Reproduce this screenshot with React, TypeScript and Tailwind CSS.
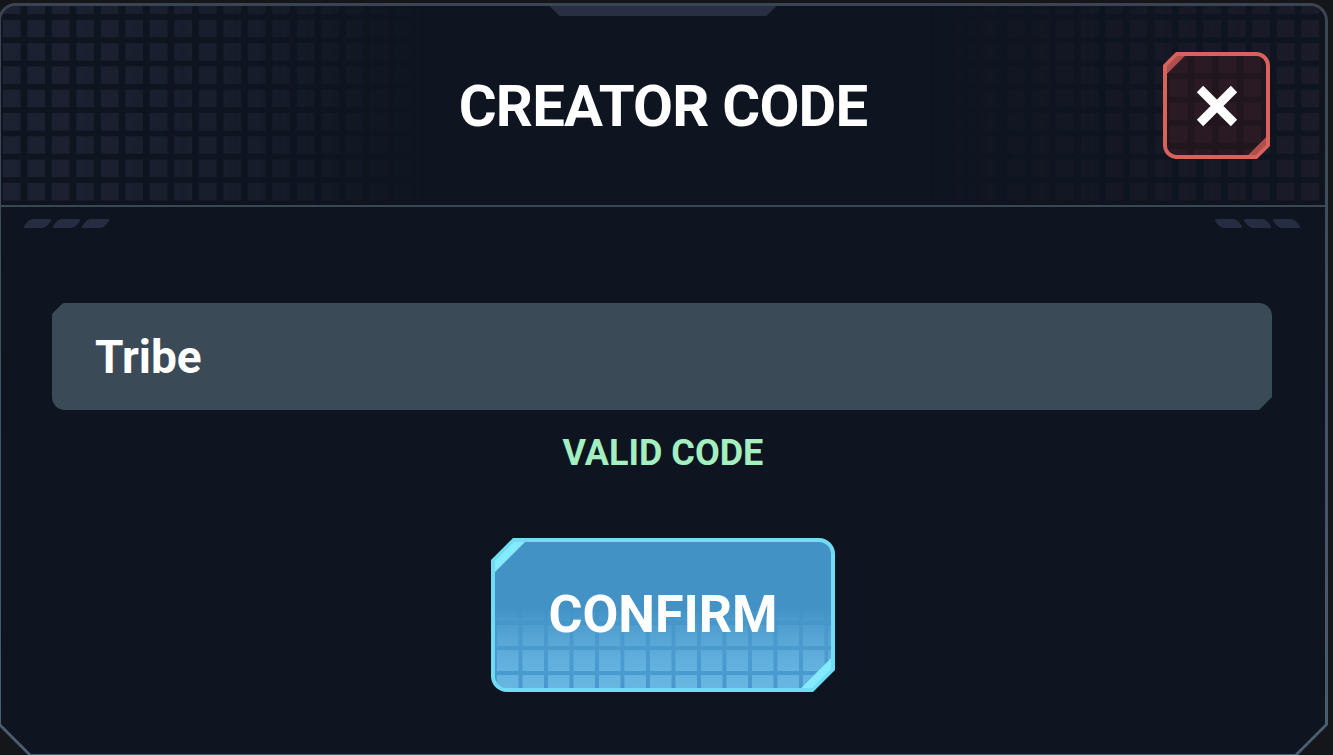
import React from "react";

const font = { fontFamily: "Roboto, 'Noto Sans', sans-serif" };

function Dashes({ flip }: { flip?: boolean }) {
  return (
    <div className="flex gap-[6px]">
      {[0, 1, 2].map((i) => (
        <div
          key={i}
          className={`h-[9px] w-[23px] rounded-[3px] bg-[#262d40] ${flip ? "skew-x-[40deg]" : "-skew-x-[40deg]"}`}
        />
      ))}
    </div>
  );
}

function CloseButton() {
  return (
    <div className="h-[107px] w-[107px] rounded-[14px] bg-[#d9625c] p-[4px] [clip-path:polygon(13px_0,100%_0,100%_calc(100%_-_13px),calc(100%_-_13px)_100%,0_100%,0_13px)]">
      <div className="h-full w-full rounded-[10px] bg-[#b04e4d] [clip-path:polygon(10px_0,100%_0,100%_calc(100%_-_10px),calc(100%_-_10px)_100%,0_100%,0_10px)]">
        <div className="relative flex h-full w-full items-center justify-center overflow-hidden rounded-[10px] bg-[#23171f] [clip-path:polygon(18px_0,100%_0,100%_calc(100%_-_18px),calc(100%_-_18px)_100%,0_100%,0_18px)]">
          <div className="absolute inset-0 bg-[#2e1d27] bg-[linear-gradient(to_right,#23171f_7px,transparent_7px),linear-gradient(to_bottom,#23171f_6px,transparent_6px)] bg-[size:24.5px_23.3px] bg-[position:-4px_-6px] opacity-70" />
          <svg width="44" height="42" viewBox="0 0 44 42" className="relative">
            <path d="M5 4 L39 38 M39 4 L5 38" stroke="#ffffff" strokeWidth="9" />
          </svg>
        </div>
      </div>
    </div>
  );
}

function ConfirmButton() {
  return (
    <button className="h-[154px] w-[344px] rounded-[16px] bg-[#70ddf4] p-[4px] [clip-path:polygon(22px_0,100%_0,100%_calc(100%_-_22px),calc(100%_-_22px)_100%,0_100%,0_22px)]">
      <div className="h-full w-full rounded-[12px] bg-[#84ebfc] [clip-path:polygon(19px_0,100%_0,100%_calc(100%_-_19px),calc(100%_-_19px)_100%,0_100%,0_19px)]">
        <div className="relative flex h-full w-full items-center justify-center overflow-hidden rounded-[12px] bg-[linear-gradient(to_bottom,#4292c6_45%,#5aaad9)] [clip-path:polygon(30px_0,100%_0,100%_calc(100%_-_30px),calc(100%_-_30px)_100%,0_100%,0_30px)]">
          <div className="absolute inset-0 bg-[#68b6e2] bg-[linear-gradient(to_right,#4797cc_4px,transparent_4px),linear-gradient(to_bottom,#4797cc_4px,transparent_4px)] bg-[size:25.5px_25px] bg-[position:-2px_4px] [mask-image:linear-gradient(to_bottom,transparent_45%,black_100%)]" />
          <span className="relative text-[52px] leading-none font-bold text-white" style={font}>
            CONFIRM
          </span>
        </div>
      </div>
    </button>
  );
}

export default function App() {
  return (
    <div className="h-[755px] w-[1333px] overflow-hidden bg-[#151619] pt-[3px]">
      <div className="ml-[-2px] h-[754px] w-[1330px] rounded-t-[18px] bg-[linear-gradient(to_bottom,#3b4552,#4a5e71)] p-[3px] [clip-path:polygon(0_0,100%_0,100%_calc(100%_-_32px),calc(100%_-_32px)_100%,32px_100%,0_calc(100%_-_32px))]">
        <div className="flex h-full flex-col overflow-hidden rounded-t-[15px] bg-[#0f1520] [clip-path:polygon(0_0,100%_0,100%_calc(100%_-_30px),calc(100%_-_30px)_100%,30px_100%,0_calc(100%_-_30px))]">
          {/* header */}
          <div className="relative grid h-[199px] shrink-0 grid-cols-[1fr_auto_1fr] items-center">
            <div className="absolute inset-0 bg-[#1d2232] bg-[linear-gradient(to_right,#0f1520_7px,transparent_7px),linear-gradient(to_bottom,#0f1520_6px,transparent_6px)] bg-[size:24.5px_23.3px] bg-[position:-5px_8px] [mask-image:linear-gradient(to_right,black_0%,rgba(0,0,0,0.75)_15%,transparent_32%)]" />
            <div className="absolute inset-0 bg-[#1f1d2c] bg-[linear-gradient(to_right,#0f1520_7px,transparent_7px),linear-gradient(to_bottom,#0f1520_6px,transparent_6px)] bg-[size:24.5px_23.3px] bg-[position:-5px_8px] [mask-image:linear-gradient(to_right,transparent_70%,rgba(0,0,0,0.8)_100%)]" />
            <div className="absolute left-1/2 top-0 h-[10px] w-[227px] -translate-x-1/2 bg-[#282f43] [clip-path:polygon(0_0,100%_0,calc(100%_-_10px)_100%,10px_100%)]" />
            <div />
            <h1 className="relative text-[58px] leading-none font-bold tracking-[-0.8px] text-white" style={font}>
              CREATOR CODE
            </h1>
            <div className="relative flex justify-end pr-[55px]">
              <CloseButton />
            </div>
          </div>
          <div className="h-[2px] shrink-0 bg-[#3a4654]" />

          {/* body */}
          <div className="flex flex-col">
            <div className="flex justify-between pl-[25px] pr-[27px] pt-[12px]">
              <Dashes />
              <Dashes flip />
            </div>
            <div className="ml-[51px] mt-[75px] flex h-[107px] w-[1220px] items-center rounded-[13px] bg-[#3b4a57] pl-[43px] [clip-path:polygon(11px_0,100%_0,100%_calc(100%_-_13px),calc(100%_-_13px)_100%,0_100%,0_11px)]">
              <span className="text-[46px] leading-none font-bold text-white" style={font}>
                Tribe
              </span>
            </div>
            <div className="mt-[25px] text-center text-[36px] leading-none font-bold text-[#a4efc0]" style={font}>
              VALID CODE
            </div>
            <div className="mt-[67px] flex justify-center">
              <ConfirmButton />
            </div>
          </div>
        </div>
      </div>
    </div>
  );
}
